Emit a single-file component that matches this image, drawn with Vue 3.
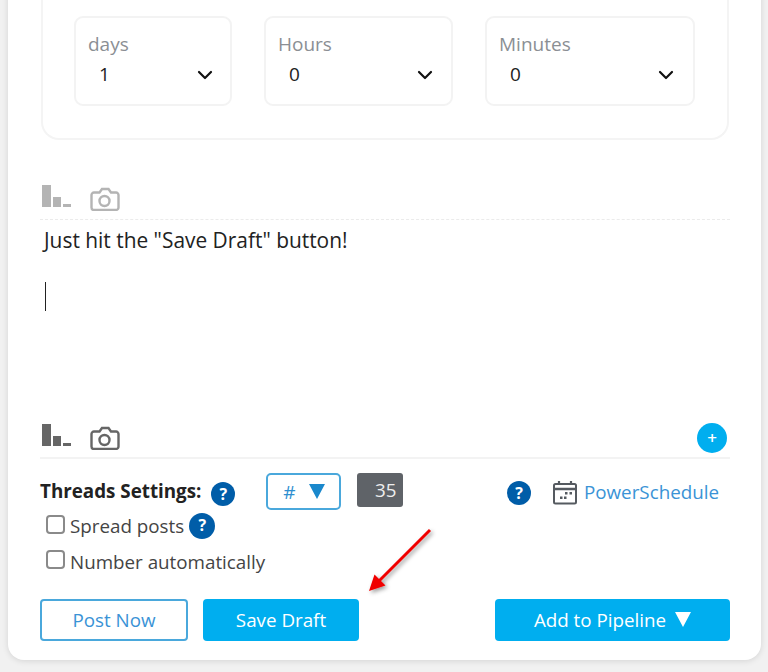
<script setup>
const timeFields = [
  { label: 'days', value: '1', cls: 'f-days' },
  { label: 'Hours', value: '0', cls: 'f-hours' },
  { label: 'Minutes', value: '0', cls: 'f-minutes' },
]
</script>

<template>
  <div class="page">
    <div class="card">
      <section class="panel">
        <div v-for="f in timeFields" :key="f.label" class="field" :class="f.cls">
          <span class="field-label">{{ f.label }}</span>
          <div class="field-row">
            <span class="field-value">{{ f.value }}</span>
            <svg class="chev" width="16" height="10" viewBox="0 0 16 10"><path d="M2 2l6 6 6-6" fill="none" stroke="#111" stroke-width="2.2" stroke-linecap="round" stroke-linejoin="round"/></svg>
          </div>
        </div>
      </section>

      <div class="toolbar faded">
        <svg class="chart" width="30" height="24" viewBox="0 0 30 24"><rect x="1" y="1" width="9" height="22" fill="currentColor"/><rect x="12" y="13" width="8" height="10" fill="currentColor"/><rect x="22" y="20" width="8" height="3" fill="currentColor"/></svg>
        <svg class="camera" width="30" height="24" viewBox="0 0 30 24"><path d="M4 5.5h5.5L12 2h6.500l2.500 3.500h5a2.500 2.500 0 0 1 2.500 2.500v12.500a2.500 2.500 0 0 1-2.500 2.500H4a2.500 2.500 0 0 1-2.500-2.500V8A2.500 2.500 0 0 1 4 5.500z" fill="none" stroke="currentColor" stroke-width="2.4"/><circle cx="14.500" cy="14" r="5" fill="none" stroke="currentColor" stroke-width="2.4"/></svg>
      </div>

      <div class="editor">
        <p class="line">Just hit the "Save Draft" button!</p>
        <span class="caret"></span>
      </div>

      <div class="toolbar strong">
        <svg class="chart" width="30" height="24" viewBox="0 0 30 24"><rect x="1" y="1" width="9" height="22" fill="currentColor"/><rect x="12" y="13" width="8" height="10" fill="currentColor"/><rect x="22" y="20" width="8" height="3" fill="currentColor"/></svg>
        <svg class="camera" width="30" height="24" viewBox="0 0 30 24"><path d="M4 5.500h5.500L12 2h6.500l2.500 3.500h5a2.500 2.500 0 0 1 2.500 2.500v12.500a2.500 2.500 0 0 1-2.500 2.500H4a2.500 2.500 0 0 1-2.500-2.500V8A2.500 2.500 0 0 1 4 5.500z" fill="none" stroke="currentColor" stroke-width="2.4"/><circle cx="14.500" cy="14" r="5" fill="none" stroke="currentColor" stroke-width="2.4"/></svg>
        <button class="plus">+</button>
      </div>

      <div class="settings">
        <div class="settings-left">
          <div class="thread-row">
            <strong class="thread-title">Threads Settings:</strong>
            <span class="help help-a">?</span>
            <button class="hash"><span>#</span><i class="tri tri-blue"></i></button>
            <span class="count">35</span>
          </div>
          <label class="check check-a"><span class="box"></span>Spread posts<span class="help help-b">?</span></label>
          <label class="check check-b"><span class="box"></span>Number automatically</label>
        </div>
        <div class="settings-right">
          <span class="help help-c">?</span>
          <svg class="cal" width="26" height="26" viewBox="0 0 26 26"><path d="M3.500 5h19a1.500 1.500 0 0 1 1.500 1.500V23a1.500 1.500 0 0 1-1.500 1.500h-19A1.500 1.500 0 0 1 2 23V6.500A1.500 1.500 0 0 1 3.500 5z" fill="none" stroke="#555a60" stroke-width="2"/><path d="M2 10h22" stroke="#555a60" stroke-width="2.500"/><path d="M7 2v4M19 2v4" stroke="#555a60" stroke-width="2.200"/><g fill="#555a60"><rect x="13" y="13" width="2.500" height="2.500"/><rect x="17.500" y="13" width="2.500" height="2.500"/><rect x="8" y="17.500" width="2.500" height="2.500"/><rect x="12" y="17.500" width="2.500" height="2.500"/></g></svg>
          <a class="power">PowerSchedule</a>
        </div>
      </div>

      <div class="actions">
        <button class="btn outline">Post Now</button>
        <button class="btn solid save">Save Draft</button>
        <button class="btn solid pipe">Add to Pipeline<i class="tri tri-white"></i></button>
      </div>

      <svg class="arrow" width="76" height="76" viewBox="0 0 76 76">
        <defs><filter id="sh" x="-30%" y="-30%" width="170%" height="170%"><feDropShadow dx="2" dy="2" stdDeviation="2" flood-color="#000" flood-opacity=".4"/></filter></defs>
        <g filter="url(#sh)"><path d="M65 7L14 58" stroke="#f00000" stroke-width="3" fill="none"/><path d="M4 68l5.500-16.500 11 11z" fill="#f00000"/></g>
      </svg>
    </div>
  </div>
</template>

<style scoped>
.page {
  width: 768px;
  height: 672px;
  overflow: hidden;
  background: #f1f1f1;
  font-family: "Open Sans", sans-serif;
  color: #333;
}
.card {
  position: relative;
  box-sizing: border-box;
  width: 753px;
  height: 700px;
  margin: -40px 0 0 8px;
  padding: 0 31px 0 32px;
  background: #fff;
  border-radius: 0 0 16px 16px;
  box-shadow: 0 1px 6px rgba(0, 0, 0, .12);
}
.panel {
  box-sizing: border-box;
  width: 688px;
  height: 180px;
  margin-left: 1px;
  padding: 56px 30px 0 31px;
  display: flex;
  gap: 32px;
  align-items: flex-start;
  border: 2px solid #f4f4f4;
  border-top: 0;
  border-radius: 0 0 18px 18px;
}
.field {
  box-sizing: border-box;
  height: 90px;
  padding: 14px 12px 0 12px;
  border: 2px solid #f3f3f3;
  border-radius: 9px;
}
.f-days { width: 158px; }
.f-hours { width: 189px; }
.f-minutes { width: 210px; }
.f-days .field-row { padding-right: 5px; }
.f-hours .field-row { padding-right: 6px; }
.f-minutes .field-row { padding-right: 7px; }
.field-label {
  display: block;
  font-size: 19px;
  line-height: 24px;
  color: #8b8f94;
}
.field-row {
  display: flex;
  justify-content: space-between;
  align-items: center;
  padding: 5px 4px 0 11px;
}
.field-value {
  font-size: 19px;
  line-height: 26px;
  color: #222;
}
.chev { margin-top: 2px; }
.toolbar {
  position: relative;
  display: flex;
  align-items: flex-end;
  gap: 19px;
}
.chart { margin-left: 1px; margin-bottom: 3px; }
.faded {
  height: 42px;
  margin-top: 38px;
  padding-bottom: 8px;
  box-sizing: border-box;
  color: #b4b4b4;
  border-bottom: 1px dashed #ebebeb;
}
.editor {
  height: 198px;
  padding: 7px 0 0 4px;
  box-sizing: border-box;
  position: relative;
}
.line {
  margin: 0;
  font-size: 20.9px;
  line-height: 26px;
  color: #222;
}
.caret {
  display: block;
  width: 1px;
  height: 29px;
  margin: 29px 0 0 1px;
  background: #222;
}
.strong {
  height: 41px;
  box-sizing: border-box;
  padding-bottom: 7px;
  color: #666;
  border-bottom: 2px solid #f3f3f3;
}
.plus {
  position: absolute;
  right: 3px;
  top: 5px;
  width: 30px;
  height: 30px;
  padding: 0;
  border: 0;
  border-radius: 50%;
  background: #00aeef;
  color: #fff;
  font: 600 17px/28px "Open Sans", sans-serif;
}
.settings {
  display: flex;
  justify-content: space-between;
  height: 140px;
  box-sizing: border-box;
}
.settings-left {
  display: flex;
  flex-direction: column;
}
.thread-row {
  display: flex;
  align-items: flex-start;
  margin-top: 14px;
  height: 38px;
}
.thread-title {
  font-size: 18.8px;
  line-height: 26px;
  font-weight: 700;
  color: #222;
  margin-top: 5px;
}
.help {
  display: inline-block;
  border-radius: 50%;
  background: #005da8;
  color: #fff;
  text-align: center;
  font-weight: 700;
  flex: none;
}
.help-a {
  width: 24px;
  height: 24px;
  font-size: 16px;
  line-height: 24px;
  margin: 9px 0 0 10px;
}
.hash {
  box-sizing: border-box;
  width: 75px;
  height: 37px;
  margin-left: 31px;
  display: flex;
  align-items: center;
  justify-content: center;
  gap: 13px;
  background: #fff;
  border: 2px solid #4aa8dc;
  border-radius: 5px;
  color: #2f8fd0;
  font: 400 19px "Open Sans", sans-serif;
}
.tri {
  display: inline-block;
  width: 0;
  height: 0;
  border-left: 8px solid transparent;
  border-right: 8px solid transparent;
}
.tri-blue { border-top: 15px solid #1a88cc; }
.tri-white { border-top: 15px solid #fff; margin-left: 9px; }
.count {
  box-sizing: border-box;
  width: 46px;
  height: 34px;
  margin-left: 16px;
  padding: 2px 7px 0 0;
  background: #5f6368;
  border-radius: 3px;
  color: #eee;
  font-size: 18.8px;
  line-height: 30px;
  text-align: right;
}
.check {
  display: flex;
  align-items: center;
  font-size: 18.8px;
  color: #444;
  padding-left: 6px;
  height: 27px;
}
.check-a { margin-top: 1px; }
.check-a .box { margin-bottom: 2px; }
.check-b { margin-top: 9px; }
.check-b .box { margin-bottom: 5px; }
.box {
  box-sizing: border-box;
  width: 19px;
  height: 19px;
  margin-right: 5px;
  border: 2px solid #8a8a8a;
  border-radius: 4px;
  background: #fff;
}
.help-b {
  width: 26px;
  height: 26px;
  font-size: 16px;
  line-height: 25px;
  margin-left: 5px;
}
.settings-right {
  display: flex;
  align-items: flex-start;
  margin: 20px 11px 0 0;
}
.help-c {
  width: 24px;
  height: 24px;
  font-size: 16px;
  line-height: 24px;
  margin: 2px 22px 0 0;
}
.cal { margin-right: 6px; margin-left: -1px; }
.power {
  font-size: 18.8px;
  line-height: 26px;
  color: #3a93d6;
}
.actions {
  display: flex;
  position: relative;
}
.btn {
  box-sizing: border-box;
  height: 42px;
  border-radius: 4px;
  font: 400 18.8px "Open Sans", sans-serif;
  padding: 0;
}
.outline {
  width: 148px;
  background: #fff;
  border: 2px solid #4aa8dc;
  color: #3a93d6;
}
.solid {
  background: #00aeef;
  border: 0;
  color: #fff;
}
.save {
  width: 156px;
  margin-left: 15px;
}
.pipe {
  width: 235px;
  margin-left: auto;
}
.arrow {
  position: absolute;
  left: 357px;
  top: 563px;
}
</style>
